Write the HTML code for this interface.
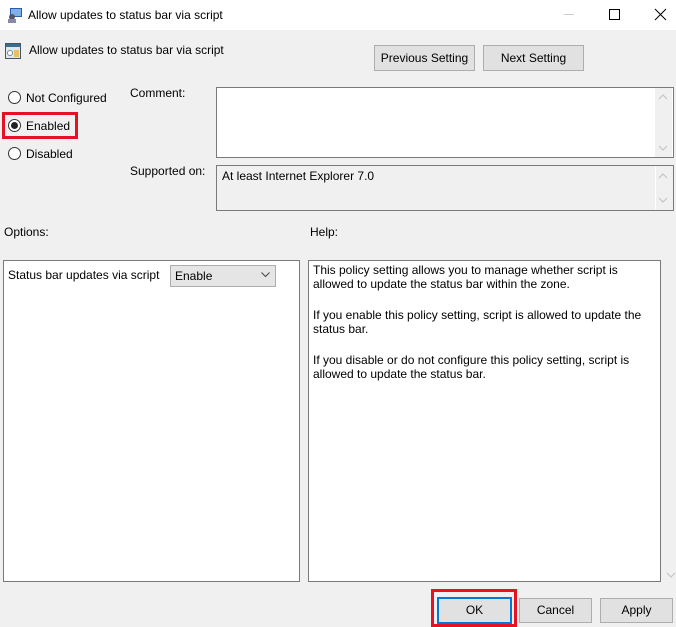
<!DOCTYPE html>
<html><head><style>
*{margin:0;padding:0;box-sizing:border-box}
body{width:676px;height:627px;background:#f0f0f0;font-family:"Liberation Sans",sans-serif;font-size:12px;color:#000;position:relative;overflow:hidden}
.a{position:absolute;white-space:nowrap}
.btn{position:absolute;background:#e1e1e1;border:1px solid #adadad;text-align:center;line-height:24px}
.box{position:absolute;border:1px solid #7a7a7a;background:#fff}
.rad{position:absolute;width:13px;height:13px;border:1px solid #333;border-radius:50%;background:#fff}
</style></head><body>
<div class="a" style="left:0;top:0;width:676px;height:30px;background:#fff"></div>
<svg class="a" style="left:7px;top:7px" width="16" height="16"><rect x="3" y="1" width="12" height="9" fill="#2a5db0"/><rect x="4" y="2" width="10" height="7" fill="#7fb0e8"/><circle cx="5" cy="10" r="3" fill="#556"/><rect x="1" y="12" width="8" height="4" fill="#88a"/></svg>
<div class="a" style="left:28px;top:8px;font-size:12px">Allow updates to status bar via script</div>
<div class="a" style="left:564px;top:14px;width:10px;height:1px;background:#ccc"></div>
<div class="a" style="left:609px;top:9px;width:11px;height:11px;border:1px solid #000"></div>
<svg class="a" style="left:654px;top:8px" width="13" height="13"><path d="M1 1L12 12M12 1L1 12" stroke="#000" stroke-width="1"/></svg>
<svg class="a" style="left:5px;top:43px" width="16" height="16"><rect x="0.5" y="0.5" width="15" height="15" fill="#dfe8ef" stroke="#456"/><rect x="1" y="1" width="14" height="3" fill="#3b6e8c"/><circle cx="5" cy="10" r="2.5" fill="#fff" stroke="#789"/><rect x="9" y="7" width="5" height="7" fill="#e8c060"/></svg>
<div class="a" style="left:29px;top:43px;font-size:12px">Allow updates to status bar via script</div>
<div class="btn" style="left:374px;top:45px;width:101px;height:26px">Previous Setting</div>
<div class="btn" style="left:483px;top:45px;width:101px;height:26px">Next Setting</div>
<div class="rad" style="left:8px;top:91px"></div><div class="a" style="left:26px;top:91px">Not Configured</div>
<div class="rad" style="left:8px;top:119px"></div><div class="a" style="left:11px;top:122px;width:7px;height:7px;border-radius:50%;background:#222"></div><div class="a" style="left:26px;top:119px">Enabled</div>
<div class="a" style="left:2px;top:112px;width:76px;height:27px;border:3px solid #e81123"></div>
<div class="rad" style="left:8px;top:147px"></div><div class="a" style="left:26px;top:147px">Disabled</div>
<div class="a" style="left:130px;top:86px">Comment:</div>
<div class="box" style="left:216px;top:87px;width:458px;height:71px"></div>
<div class="a" style="left:655px;top:88px;width:17px;height:69px;background:#f0f0f0"></div>
<svg class="a" style="left:658px;top:94px" width="10" height="6"><path d="M1 5L5 1L9 5" stroke="#c0c0c0" fill="none"/></svg>
<svg class="a" style="left:658px;top:145px" width="10" height="6"><path d="M1 1L5 5L9 1" stroke="#c0c0c0" fill="none"/></svg>
<div class="a" style="left:130px;top:164px">Supported on:</div>
<div class="box" style="left:216px;top:165px;width:458px;height:46px;background:#f0f0f0"></div>
<div class="a" style="left:222px;top:169px">At least Internet Explorer 7.0</div>
<div class="a" style="left:655px;top:166px;width:17px;height:44px;background:#f0f0f0;border-left:1px solid #fff"></div>
<svg class="a" style="left:658px;top:173px" width="10" height="6"><path d="M1 5L5 1L9 5" stroke="#c0c0c0" fill="none"/></svg>
<svg class="a" style="left:658px;top:197px" width="10" height="6"><path d="M1 1L5 5L9 1" stroke="#c0c0c0" fill="none"/></svg>
<div class="a" style="left:4px;top:225px">Options:</div>
<div class="a" style="left:310px;top:225px">Help:</div>
<div class="box" style="left:3px;top:260px;width:297px;height:322px"></div>
<div class="a" style="left:8px;top:268px">Status bar updates via script</div>
<div class="a" style="left:170px;top:265px;width:106px;height:22px;background:#e5e5e5;border:1px solid #adadad;padding:3px 0 0 4px">Enable</div>
<svg class="a" style="left:261px;top:272px" width="9" height="6"><path d="M0.5 0.5L4.5 4.5L8.5 0.5" stroke="#444" fill="none"/></svg>
<div class="box" style="left:308px;top:260px;width:353px;height:322px"></div>
<div class="a" style="left:313px;top:263px;line-height:14px">This policy setting allows you to manage whether script is<br>allowed to update the status bar within the zone.<br><br><div style="height:3px"></div>If you enable this policy setting, script is allowed to update the<br>status bar.<br><br><div style="height:3px"></div>If you disable or do not configure this policy setting, script is<br>allowed to update the status bar.</div>
<svg class="a" style="left:666px;top:572px" width="10" height="6"><path d="M1 1L5 5L9 1" stroke="#c0c0c0" fill="none"/></svg>
<div class="a" style="left:431px;top:589px;width:86px;height:38px;border:3px solid #e81123"></div>
<div class="btn" style="left:437px;top:597px;width:75px;height:27px;border:2px solid #0078d7;line-height:23px">OK</div>
<div class="btn" style="left:519px;top:598px;width:73px;height:25px;line-height:23px">Cancel</div>
<div class="btn" style="left:600px;top:598px;width:73px;height:25px;line-height:23px">Apply</div>
</body></html>
